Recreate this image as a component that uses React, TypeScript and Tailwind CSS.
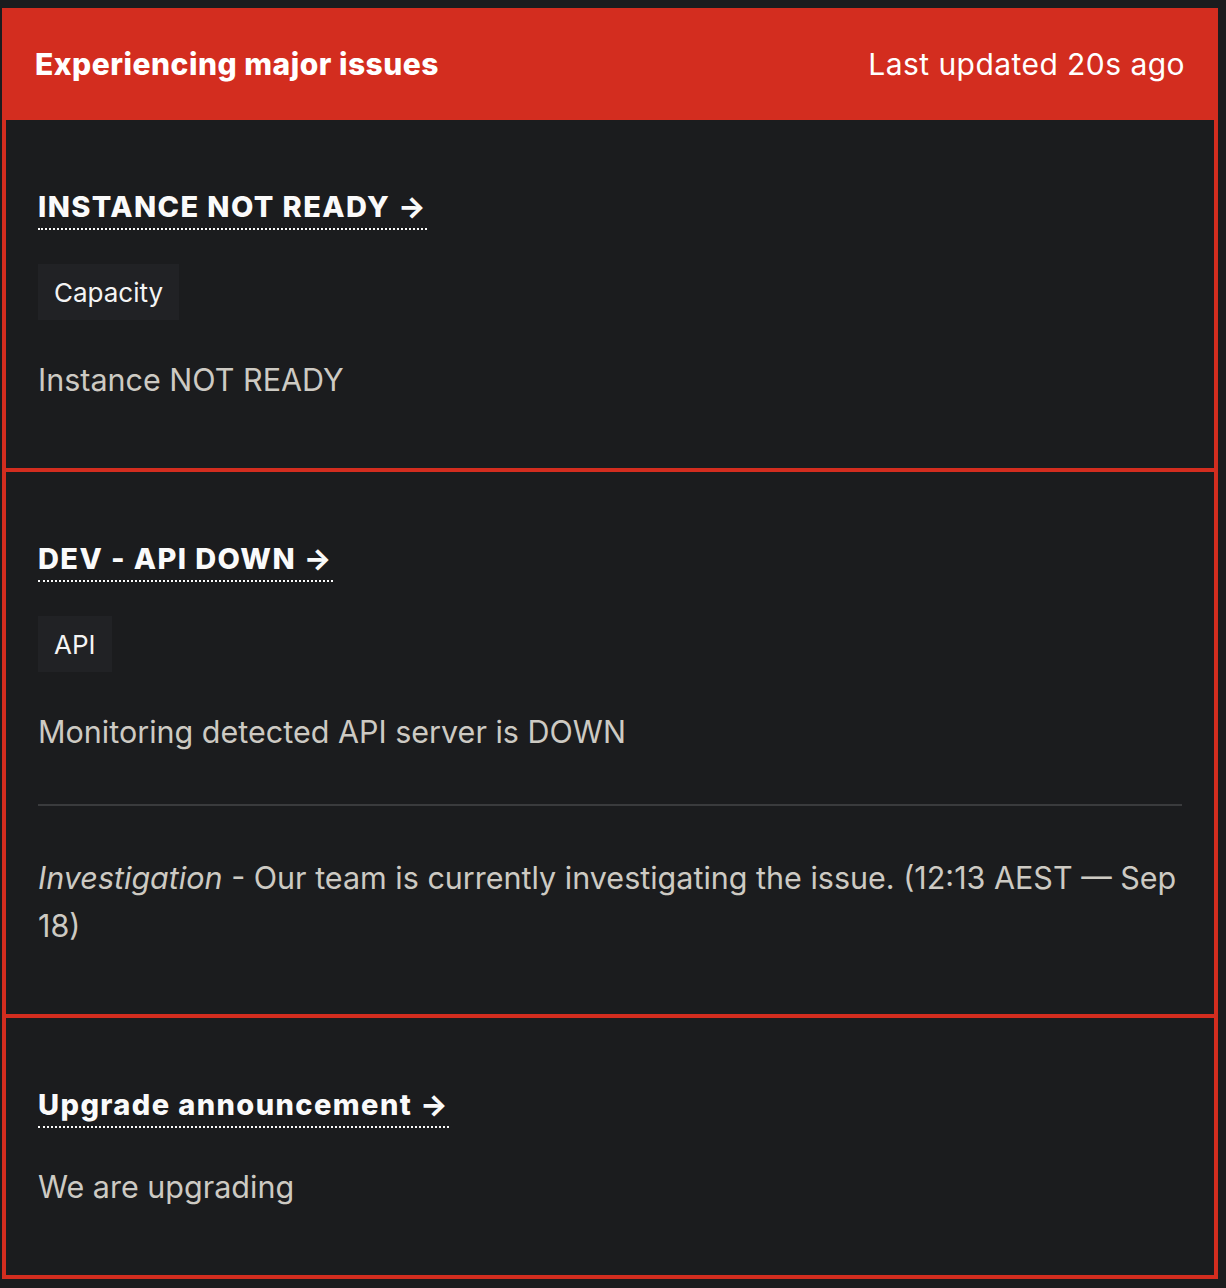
import React from "react";

const font = { fontFamily: "Inter, 'Noto Sans', sans-serif" };

function Title({ children }: { children: React.ReactNode }) {
  return (
    <div>
      <a className="inline-block text-[29px] leading-[42px] font-extrabold text-[#fafafa] border-b-2 border-dotted border-[#fafafa] tracking-[1.4px]">
        {children} →
      </a>
    </div>
  );
}

function Badge({ children }: { children: React.ReactNode }) {
  return (
    <div className="mt-[34px] inline-flex h-[56px] items-center bg-[#212225] px-4 text-[26px] text-[#f4f4f4]">
      {children}
    </div>
  );
}

function Body({ children, className = "" }: { children: React.ReactNode; className?: string }) {
  return <p className={"text-[30.5px] leading-[48px] text-[#cdcac3] " + className}>{children}</p>;
}

export default function App() {
  return (
    <div className="min-h-screen bg-[#1b1c1e] pt-2 pl-[2px] pb-[10px]" style={font}>
      <div className="w-[1216px] border-x-4 border-b-4 border-[#d32d1f]">
        <div className="-mx-1 flex h-[112px] items-center justify-between bg-[#d32d1f] px-[33px] text-white">
          <span className="text-[30px] font-extrabold tracking-[0.5px]">Experiencing major issues</span>
          <span className="text-[30px] tracking-[0.45px]">Last updated 20s ago</span>
        </div>

        <section className="px-8 pt-[66px] pb-16">
          <Title>INSTANCE NOT READY</Title>
          <Badge>Capacity</Badge>
          <Body className="mt-9">Instance NOT READY</Body>
        </section>

        <section className="border-t-4 border-[#d32d1f] px-8 pt-[66px] pb-16">
          <Title>DEV - API DOWN</Title>
          <Badge>API</Badge>
          <Body className="mt-9">Monitoring detected API server is DOWN</Body>
          <hr className="mt-12 border-0 border-t-2 border-[#3a3b3d]" />
          <Body className="mt-12">
            <em>Investigation</em> - Our team is currently investigating the issue. (12:13 AEST — Sep 18)
          </Body>
        </section>

        <section className="border-t-4 border-[#d32d1f] px-8 pt-[66px] pb-16">
          <Title>Upgrade announcement</Title>
          <Body className="mt-[35px]">We are upgrading</Body>
        </section>
      </div>
    </div>
  );
}
